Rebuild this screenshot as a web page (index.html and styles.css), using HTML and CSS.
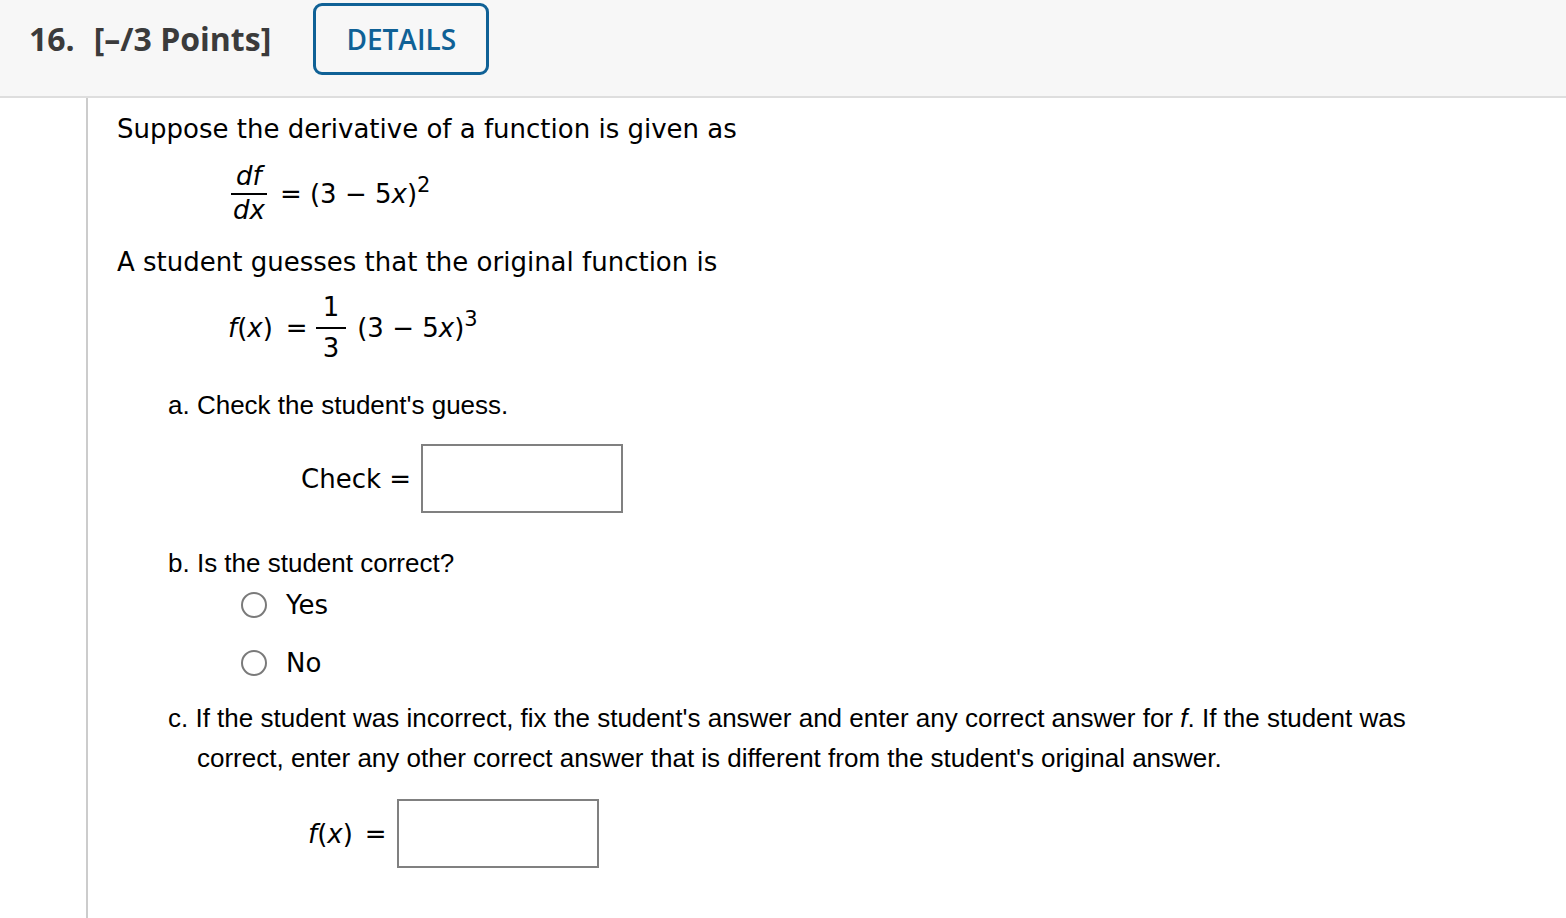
FILE: index.html
```html
<!DOCTYPE html>
<html>
<head>
<meta charset="utf-8">
<link rel="stylesheet" href="styles.css">
</head>
<body>
<div class="header">
  <div class="qnum">16.</div>
  <div class="points">[–/3 Points]</div>
  <div class="details">DETAILS</div>
</div>
<div class="main">
  <div class="gutter"></div>
  <div class="content">
    <p class="v line1">Suppose the derivative of a function is given as</p>
    <div class="v eq eq1">
      <span class="frac big"><span class="num"><i>df</i></span><span class="den"><i>dx</i></span></span>
      <span class="rest">= (3 − 5<i>x</i>)<sup>2</sup></span>
    </div>
    <p class="v line2">A student guesses that the original function is</p>
    <div class="v eq eq2">
      <span class="rest"><i>f</i>(<i>x</i>)<span class="eqs">=</span></span>
      <span class="frac small"><span class="num">1</span><span class="den">3</span></span>
      <span class="rest">(3 − 5<i>x</i>)<sup>3</sup></span>
    </div>
    <p class="a part pa">a. Check the student's guess.</p>
    <div class="v row check">
      <span class="lbl">Check =</span>
      <span class="box"></span>
    </div>
    <p class="a part pb">b. Is the student correct?</p>
    <div class="v radio r1"><span class="circ"></span><span>Yes</span></div>
    <div class="v radio r2"><span class="circ"></span><span>No</span></div>
    <p class="a pc">c. If the student was incorrect, fix the student's answer and enter any correct answer for <i>f</i>. If the student was correct, enter any other correct answer that is different from the student's original answer.</p>
    <div class="v row fx">
      <span class="lbl"><i>f</i>(<i>x</i>)<span class="eqs2">=</span></span>
      <span class="box"></span>
    </div>
  </div>
</div>
</body>
</html>
```
FILE: styles.css
```css
html, body {
  margin: 0;
  padding: 0;
  background: #ffffff;
  color: #000;
}
body {
  width: 1566px;
  height: 918px;
  overflow: hidden;
}
.header {
  height: 96px;
  background: #f7f7f7;
  border-bottom: 2px solid #dedede;
  display: flex;
  align-items: flex-start;
  padding-left: 29px;
  font-family: "Open Sans", sans-serif;
}
.qnum, .points {
  font-weight: 700;
  font-size: 32px;
  color: #3b3b3b;
  margin-top: 18px;
  line-height: 42px;
}
.points {
  margin-left: 19px;
}
.details {
  margin-left: 42px;
  margin-top: 3px;
  width: 170px;
  height: 66px;
  border: 3px solid #0f6196;
  border-radius: 9px;
  color: #0f6196;
  font-weight: 600;
  font-size: 28px;
  display: flex;
  align-items: center;
  justify-content: center;
}
.main {
  display: flex;
  height: 820px;
}
.gutter {
  width: 86px;
  border-right: 2px solid #cccccc;
}
.content {
  padding-left: 29px;
  flex: 1;
}
p { margin: 0; }
.v {
  font-family: "DejaVu Sans", Verdana, sans-serif;
  font-size: 26px;
}
.a {
  font-family: "Liberation Sans", Arial, sans-serif;
  font-size: 26px;
}
.line1 { margin-top: 16px; line-height: 30px; }
.eq {
  display: flex;
  align-items: center;
  margin-left: 111px;
}
.eq1 { margin-top: 18px; }
.frac {
  display: inline-flex;
  flex-direction: column;
  align-items: center;
}
.frac .num {
  border-bottom: 2px solid #000;
  line-height: 28px;
}
.frac .den {
  line-height: 30px;
}
.frac.big { margin-right: 10px; }
.frac.big .num { padding: 0 5px 3px; }
.frac.big .den { padding: 0 5px; }
.frac.small { margin-left: 8px; margin-right: 11px; }
.frac.small .num { padding: 0 7px 6px; }
.frac.small .den { padding: 4px 7px 0; }
.eqs { margin-left: 13px; }
.eqs2 { margin-left: 12px; }
sup { font-size: 21px; line-height: 0; vertical-align: 11px; }
.line2 { margin-top: 22px; line-height: 30px; }
.eq2 { margin-top: 16px; }
.part { line-height: 30px; }
.pa { margin-left: 51px; margin-top: 27px; }
.row {
  display: flex;
  align-items: center;
}
.lbl { margin-right: 10px; }
.box {
  display: block;
  width: 198px;
  height: 65px;
  border: 2px solid #808080;
}
.check { margin-left: 184px; margin-top: 24px; }
.pb { margin-left: 51px; margin-top: 35px; }
.radio {
  display: flex;
  align-items: center;
  margin-left: 124px;
  height: 30px;
}
.r1 { margin-top: 12px; }
.r2 { margin-top: 28px; }
.circ {
  width: 26px;
  height: 26px;
  border: 2px solid #7a7a7a;
  border-radius: 50%;
  margin-right: 19px;
  box-sizing: border-box;
}
.pc {
  margin-left: 80px;
  margin-top: 20px;
  text-indent: -29px;
  line-height: 40px;
  width: 1260px;
}
.fx { margin-left: 191px; margin-top: 21px; }
```
